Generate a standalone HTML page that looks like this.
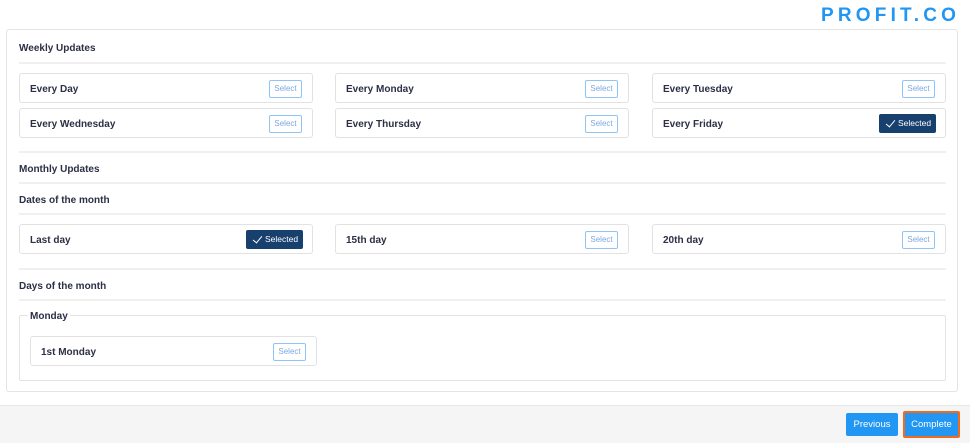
<!DOCTYPE html>
<html><head><style>
*{box-sizing:border-box;margin:0;padding:0}
body{width:970px;height:443px;background:#fff;font-family:"Liberation Sans",sans-serif;position:relative;overflow:hidden;color:#2c2f45}
.a{position:absolute}
.logo{left:821px;top:5px;font-size:19px;font-weight:bold;color:#2196f3;letter-spacing:4.2px}
.panel{left:6px;top:29px;width:952px;height:363px;border:1px solid #e4e4e4;border-radius:3px}
.t{font-size:10px;font-weight:bold;color:#2c2f45}
.ln{height:2px;background:#f0f0f0;left:19px;width:927px}
.card{border:1px solid #e2e2e2;border-radius:3px;height:30px;width:294px}
.card span{position:absolute;left:10px;top:10px;font-size:10px;font-weight:600;color:#2c2f45}
.sel{position:absolute;right:10px;top:6px;width:33px;height:18px;border:1px solid #90c4f5;border-radius:2px;color:#7aa8e0;font-size:8px;text-align:center;line-height:16px;background:#fff}
.on{position:absolute;right:9px;top:5px;width:57px;height:19px;background:#17406e;border-radius:2px;color:#fff;font-size:8.5px;line-height:19px;padding-left:19px}
.on:before{content:"";position:absolute;left:9px;top:4px;width:4px;height:8px;border:solid #fff;border-width:0 1.5px 1.5px 0;transform:rotate(40deg)}
.foot{left:0;top:405px;width:970px;height:38px;background:#f5f5f5;border-top:1px solid #e6e6e6}
.btn{background:#2196f3;color:#fff;font-size:9.5px;text-align:center;border-radius:2px}
</style></head><body>
<div class="a logo">PROFIT.CO</div>
<div class="a panel"></div>
<div class="a t" style="left:19px;top:43px">Weekly Updates</div>
<div class="a ln" style="top:62px"></div>
<div class="a card" style="left:19px;top:73px"><span>Every Day</span><div class="sel">Select</div></div>
<div class="a card" style="left:335px;top:73px"><span>Every Monday</span><div class="sel">Select</div></div>
<div class="a card" style="left:652px;top:73px"><span>Every Tuesday</span><div class="sel">Select</div></div>
<div class="a card" style="left:19px;top:108px"><span>Every Wednesday</span><div class="sel">Select</div></div>
<div class="a card" style="left:335px;top:108px"><span>Every Thursday</span><div class="sel">Select</div></div>
<div class="a card" style="left:652px;top:108px"><span>Every Friday</span><div class="on">Selected</div></div>
<div class="a ln" style="top:151px"></div>
<div class="a t" style="left:19px;top:164px">Monthly Updates</div>
<div class="a ln" style="top:182px"></div>
<div class="a t" style="left:19px;top:195px">Dates of the month</div>
<div class="a ln" style="top:213px"></div>
<div class="a card" style="left:19px;top:224px"><span>Last day</span><div class="on">Selected</div></div>
<div class="a card" style="left:335px;top:224px"><span>15th day</span><div class="sel">Select</div></div>
<div class="a card" style="left:652px;top:224px"><span>20th day</span><div class="sel">Select</div></div>
<div class="a ln" style="top:268px"></div>
<div class="a t" style="left:19px;top:281px">Days of the month</div>
<div class="a ln" style="top:299px"></div>
<div class="a" style="left:19px;top:315px;width:927px;height:66px;border:1px solid #e4e4e4;border-radius:2px"></div>
<div class="a t" style="left:28px;top:311px;background:#fff;padding:0 2px">Monday</div>
<div class="a card" style="left:30px;top:336px;width:287px"><span>1st Monday</span><div class="sel">Select</div></div>
<div class="a foot"></div>
<div class="a btn" style="left:846px;top:413px;width:52px;height:23px;line-height:23px">Previous</div>
<div class="a btn" style="left:903px;top:411px;width:57px;height:27px;line-height:23px;border:2px solid #f26b1d">Complete</div>
</body></html>
